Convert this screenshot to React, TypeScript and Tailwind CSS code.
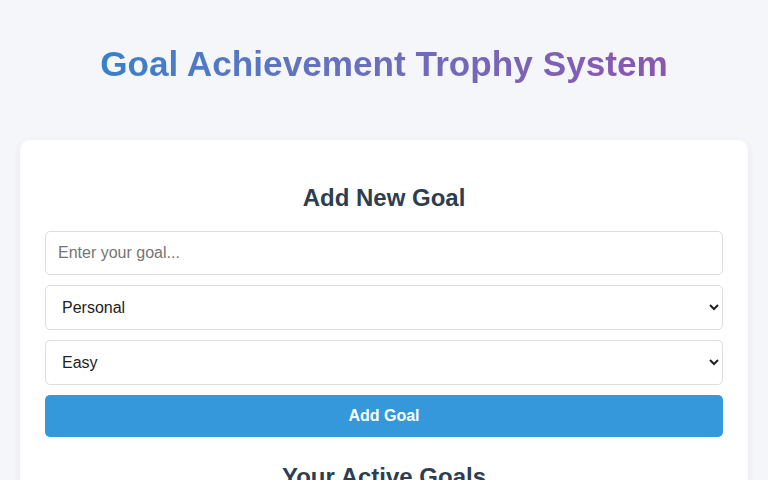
export default function App() {
  return (
    <div className="min-h-screen bg-[#f5f6fa] px-5 font-['Liberation_Sans',Arial,sans-serif]">
      {/* Page title with gradient text */}
      <h1 className="pt-[44px] text-center text-[35.2px] font-bold leading-[40px]">
        <span className="bg-gradient-to-r from-[#3681c9] to-[#8a56b0] bg-clip-text text-transparent">
          Goal Achievement Trophy System
        </span>
      </h1>

      {/* Goal form card */}
      <div className="mt-[56px] rounded-[10px] bg-white px-[25px] pt-[43px] pb-6 shadow-[0_2px_10px_rgba(0,0,0,0.06)]">
        <h2 className="mb-[18px] text-center text-[24px] font-bold leading-[30px] text-[#2c3e50]">
          Add New Goal
        </h2>
        <div className="flex flex-col gap-[10px]">
          <input
            type="text"
            placeholder="Enter your goal..."
            className="h-[44px] w-full rounded-[5px] border border-[#dddddd] px-3 text-base text-[#333] placeholder:text-[#757575] outline-none"
          />
          <select className="h-[45px] w-full rounded-[5px] border border-[#dddddd] bg-white px-3 text-base text-[#222] outline-none">
            <option>Personal</option>
            <option>Work</option>
            <option>Health</option>
          </select>
          <select className="h-[45px] w-full rounded-[5px] border border-[#dddddd] bg-white px-3 text-base text-[#222] outline-none">
            <option>Easy</option>
            <option>Medium</option>
            <option>Hard</option>
          </select>
          <button className="h-[42px] w-full rounded-[5px] bg-[#3498db] text-base font-bold text-white">
            Add Goal
          </button>
        </div>
        <h2 className="mt-[25px] text-center text-[24px] font-bold leading-[30px] text-[#2c3e50]">
          Your Active Goals
        </h2>
      </div>
    </div>
  );
}
